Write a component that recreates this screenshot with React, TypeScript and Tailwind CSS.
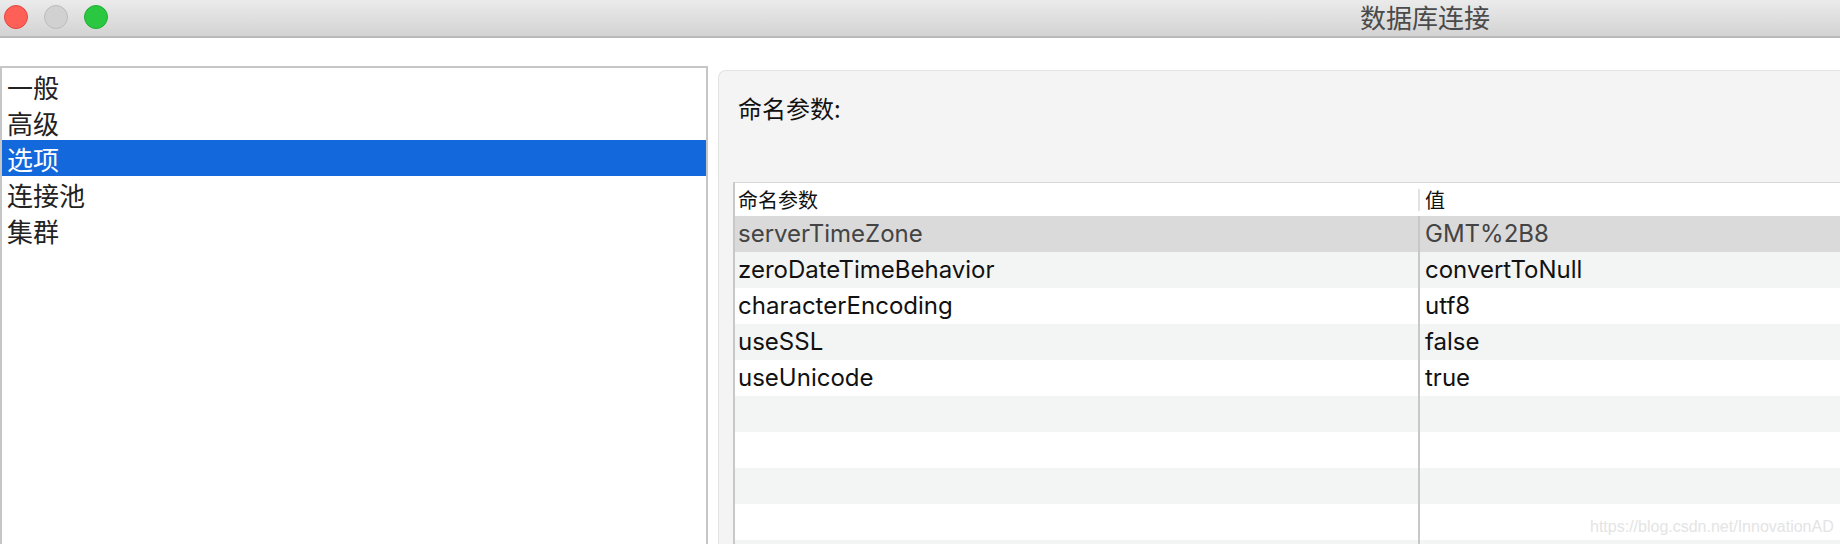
const CJK = { fontFamily: '"Noto Sans CJK SC", "Noto Sans", sans-serif' };

const params = [
  { name: "serverTimeZone", value: "GMT%2B8" },
  { name: "zeroDateTimeBehavior", value: "convertToNull" },
  { name: "characterEncoding", value: "utf8" },
  { name: "useSSL", value: "false" },
  { name: "useUnicode", value: "true" },
];

const sections = ["一般", "高级", "选项", "连接池", "集群"];

export default function App() {
  const rows = [...params, ...Array(5).fill(null)];

  return (
    <div className="relative w-[1840px] h-[544px] overflow-hidden bg-white flex flex-col" style={CJK}>
      {/* Title bar */}
      <div className="h-[38px] shrink-0 flex items-center pl-[4px] pb-[2px] border-b-2 border-[#b9b9b9] bg-gradient-to-b from-[#ebebeb] to-[#d3d3d3]">
        <div className="flex items-center gap-[16px] shrink-0">
          <span className="w-[24px] h-[24px] rounded-full bg-[#fe5f57] border border-[#e2463f]" />
          <span className="w-[24px] h-[24px] rounded-full bg-[#d1d1d1] border border-[#bcbcbc]" />
          <span className="w-[24px] h-[24px] rounded-full bg-[#2ac840] border border-[#1eae30]" />
        </div>
        <span className="ml-[1252px] shrink-0 whitespace-nowrap text-[26px] leading-[32px] text-[#4a4a4a]">数据库连接</span>
      </div>

      <div className="flex flex-1 pt-[28px] min-h-0">
        {/* Section list */}
        <div className="w-[708px] shrink-0 border-l-2 border-t-2 border-r-2 border-[#c6c6c6] bg-white">
          {sections.map((s) => (
            <div
              key={s}
              className={`h-[36px] flex items-center pl-[5px] text-[26px] ${
                s === "选项" ? "bg-[#1368dc] text-white" : "text-[#222]"
              }`}
            >
              {s}
            </div>
          ))}
        </div>

        {/* Options panel */}
        <div className="ml-[10px] mt-[4px] flex-1 min-h-0 flex flex-col bg-[#f4f4f4] rounded-tl-lg border-l border-t border-[#e3e3e3] overflow-hidden">
          <div className="shrink-0 pt-[21px] pl-[19px] h-[111px] text-[24px] leading-[32px] text-[#111]">命名参数:</div>

          <div className="ml-[14px] flex-1 flex flex-col border-l-2 border-t border-l-[#c8c8c8] border-t-[#d6d6d6] bg-white">
            <div className="h-[33px] shrink-0 flex items-center text-[20px] text-[#111]">
              <div className="w-[683px] pl-[3px]">命名参数</div>
              <div className="h-[22px] border-l-2 border-[#e2e2e2]" />
              <div className="pl-[5px]">值</div>
            </div>
            {rows.map((r, i) => (
              <div
                key={i}
                className={`h-[36px] shrink-0 flex text-[24px] ${
                  i === 0 ? "bg-[#dadada] text-[#444]" : i % 2 === 1 ? "bg-[#f3f5f4] text-[#111]" : "bg-white text-[#111]"
                }`}
                style={{ fontFamily: "Inter, sans-serif" }}
              >
                <div className="w-[683px] pl-[3px] flex items-center">{r?.name}</div>
                <div className="w-[2px] bg-[#c8c8c8]" />
                <div className="pl-[5px] flex items-center">{r?.value}</div>
              </div>
            ))}
          </div>
        </div>
      </div>

      {/* Watermark */}
      <span
        className="absolute left-[1590px] top-[515px] whitespace-nowrap text-[16px] text-[#e4e4e4]"
        style={{ fontFamily: '"Liberation Sans", Arial, sans-serif' }}
      >
        https://blog.csdn.net/InnovationAD
      </span>
    </div>
  );
}
